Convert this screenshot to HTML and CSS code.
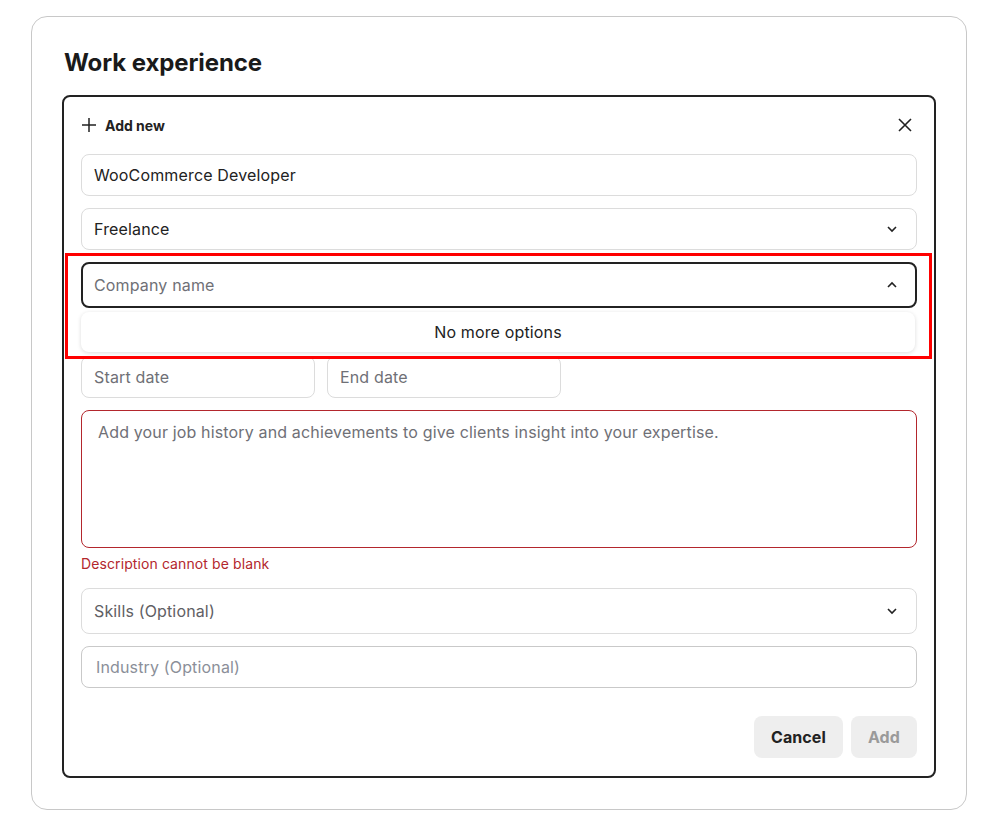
FILE: index.html
```html
<!DOCTYPE html>
<html lang="en">
<head>
    <meta charset="UTF-8">
    <meta name="viewport" content="width=device-width,initial-scale=1.0">
    <title>Work experience</title>
    <link rel="stylesheet" href="styles.css">
</head>
<body>
    <div class="page">
        <section class="card">
            <h2 class="title">Work experience</h2>
            <!-- Add new form -->
            <div class="editor">
                <div class="editor-head">
                    <div class="add-new">
                        <svg width="16" height="16" viewBox="0 0 16 16"><path d="M8 1v14M1 8h14" stroke="#222" stroke-width="1.5" fill="none"/></svg>
                        <span>Add new</span>
                    </div>
                    <svg class="close" width="14" height="14" viewBox="0 0 14 14"><path d="M1 1l12 12M13 1L1 13" stroke="#222" stroke-width="1.6" fill="none"/></svg>
                </div>
                <div class="form">
                    <div class="field">WooCommerce Developer</div>
                    <div class="field select">
                        <span>Freelance</span>
                        <svg width="12" height="8" viewBox="0 0 12 8"><path d="M2 2l4 4 4-4" stroke="#222" stroke-width="1.6" fill="none"/></svg>
                    </div>
                    <div class="combo">
                        <div class="field select focused">
                            <span class="placeholder">Company name</span>
                            <svg width="12" height="8" viewBox="0 0 12 8"><path d="M2 6l4-4 4 4" stroke="#222" stroke-width="1.6" fill="none"/></svg>
                        </div>
                        <div class="menu">No more options</div>
                        <div class="highlight"></div>
                    </div>
                    <div class="dates">
                        <div class="field date"><span class="placeholder">Start date</span></div>
                        <div class="field date"><span class="placeholder">End date</span></div>
                    </div>
                    <div class="desc-group">
                        <div class="field textarea error">
                            <span class="placeholder">Add your job history and achievements to give clients insight into your expertise.</span>
                        </div>
                        <div class="error-text">Description cannot be blank</div>
                    </div>
                    <div class="field select tall">
                        <span class="muted">Skills (Optional)</span>
                        <svg width="12" height="8" viewBox="0 0 12 8"><path d="M2 2l4 4 4-4" stroke="#222" stroke-width="1.6" fill="none"/></svg>
                    </div>
                    <div class="field industry"><span class="placeholder light">Industry (Optional)</span></div>
                </div>
                <div class="actions">
                    <button class="btn">Cancel</button>
                    <button class="btn" disabled>Add</button>
                </div>
            </div>
        </section>
    </div>
</body>
</html>
```

FILE: styles.css
```css
body {
    margin: 0;
    background: #fff;
    color: #222;
    font-family: Inter, "Liberation Sans", Arial, sans-serif;
}
.page {
    padding: 16px 31px 20px;
}
.card {
    width: 936px;
    box-sizing: border-box;
    border: 1px solid #c8c8c8;
    border-radius: 16px;
    padding: 30px 30px 31px;
}
.title {
    margin: 0 0 16px 2px;
    font-size: 24px;
    line-height: 32px;
    font-weight: 700;
    color: #1a1a1a;
    letter-spacing: -0.1px;
}
.editor {
    border: 2px solid #222;
    border-radius: 8px;
    padding: 16px 17px 18px;
}
.editor-head {
    display: flex;
    align-items: center;
    justify-content: space-between;
    height: 24px;
    margin-bottom: 17px;
}
.add-new {
    display: flex;
    align-items: center;
    gap: 8px;
    font-size: 14px;
    font-weight: 700;
}
.close {
    margin-right: 5px;
}
.form {
    display: flex;
    flex-direction: column;
    gap: 12px;
}
.field {
    box-sizing: border-box;
    height: 42px;
    border: 1px solid #dcdcdc;
    border-radius: 8px;
    padding: 0 12px 1px;
    display: flex;
    align-items: center;
    font-size: 16px;
    letter-spacing: 0.15px;
}
.select {
    justify-content: space-between;
    padding-right: 18px;
}
.focused {
    height: 46px;
    border: 2px solid #222;
    padding-left: 11px;
    padding-right: 17px;
}
.placeholder {
    color: #6f7076;
}
.muted {
    color: #5f6064;
}
.light {
    color: #8b8f99;
}
.combo {
    position: relative;
}
.menu {
    margin: 4px 2px 0 0;
    height: 40px;
    border-radius: 8px;
    box-shadow: 0 1px 4px rgba(0, 0, 0, 0.14);
    display: flex;
    align-items: center;
    justify-content: center;
    font-size: 16px;
    letter-spacing: 0.15px;
}
.highlight {
    position: absolute;
    left: -16px;
    right: -15px;
    top: -9px;
    bottom: -7px;
    border: 3px solid #f00;
    pointer-events: none;
}
.dates {
    display: flex;
    gap: 12px;
    margin-top: -8px;
}
.date {
    width: 234px;
}
.desc-group {
    display: flex;
    flex-direction: column;
}
.textarea {
    height: 138px;
    align-items: flex-start;
    padding: 11px 16px;
}
.error {
    border-color: #b3272d;
}
.error-text {
    margin: 8px 0 4px;
    font-size: 14px;
    line-height: 16px;
    color: #b3272d;
    letter-spacing: 0.1px;
}
.tall {
    height: 46px;
}
.industry {
    border-color: #c9c9c9;
    padding-left: 14px;
}
.actions {
    display: flex;
    justify-content: flex-end;
    gap: 8px;
    margin-top: 28px;
}
.btn {
    height: 42px;
    padding: 0 17px;
    border: none;
    border-radius: 8px;
    background: #eee;
    font-family: inherit;
    font-size: 16px;
    font-weight: 700;
    color: #222;
    letter-spacing: 0.1px;
}
.btn:disabled {
    color: #9a9a9a;
}
```
